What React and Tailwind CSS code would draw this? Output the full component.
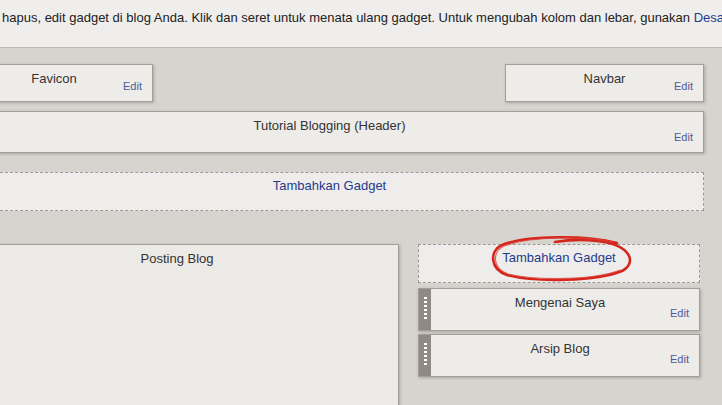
const TITLE = 'text-[13px] leading-[16px] text-[#333]';
const EDIT = 'text-[11px] leading-[13px] text-[#4b5b9b]';

function Widget({ title, className = '' }) {
  return (
    <div className={`grid border border-[#a39e99] bg-[#eeece9] pt-[6px] pr-[10px] pb-[8px] shadow-[1px_1px_3px_rgba(0,0,0,0.22)] ${className}`}>
      <div className={`${TITLE} col-start-1 row-start-1 self-start text-center pl-[10px]`}>{title}</div>
      <div className={`${EDIT} col-start-1 row-start-1 self-end justify-self-end`}>Edit</div>
    </div>
  );
}

function SideWidget({ title }) {
  return (
    <div className="flex h-[43px] border border-[#a39e99] bg-[#eeece9] shadow-[1px_1px_3px_rgba(0,0,0,0.22)]">
      <div className="w-[12px] bg-[#8f8a85] flex flex-col items-center gap-[2px] pt-[8px]">
        {[...Array(6)].map((_, i) => (
          <span key={i} className="w-[3px] h-[2px] bg-white" />
        ))}
      </div>
      <div className="flex-1 grid pt-[6px] pr-[10px] pb-[10px]">
        <div className={`${TITLE} col-start-1 row-start-1 self-start text-center`}>{title}</div>
        <div className={`${EDIT} col-start-1 row-start-1 self-end justify-self-end`}>Edit</div>
      </div>
    </div>
  );
}

function AddGadget({ className = '', children }) {
  return (
    <div className={`relative border border-dashed border-[#9c9893] bg-[#eeedeb] pt-[5px] text-center text-[13px] leading-[16px] text-[#1f3b8c] ${className}`}>
      Tambahkan Gadget
      {children}
    </div>
  );
}

export default function App() {
  return (
    <div className="w-[722px] h-[405px] overflow-hidden bg-[#d7d3ce] font-['Liberation_Sans',Arial,sans-serif]">
      {/* info bar */}
      <div className="h-[48px] bg-[#efeeec] border-b border-[#bdb9b4] pl-[2px] pt-[10px] text-[13px] leading-[16px] text-[#222] whitespace-nowrap overflow-hidden">
        hapus, edit gadget di blog Anda. Klik dan seret untuk menata ulang gadget. Untuk mengubah kolom dan lebar, gunakan{' '}
        <span className="text-[#1f3b8c]">Desainer Template</span>.
      </div>

      <div className="-ml-[45px] w-[749px] pt-[16px]">
        <div className="flex justify-between">
          <Widget title="Favicon" className="w-[198px] h-[38px]" />
          <Widget title="Navbar" className="w-[199px] h-[38px]" />
        </div>

        <Widget title="Tutorial Blogging (Header)" className="mt-[9px] h-[42px]" />

        <AddGadget className="mt-[19px] h-[39px]" />

        <div className="flex mt-[33px] gap-[19px]">
          <div className="w-[444px] h-[200px] border border-[#a39e99] bg-[#eceae7] pt-[6px] shadow-[1px_1px_3px_rgba(0,0,0,0.22)]">
            <div className={`${TITLE} text-center`}>Posting Blog</div>
          </div>

          <div className="w-[282px] flex flex-col">
            <AddGadget className="h-[39px]">
              <svg className="absolute left-[68px] top-[-12px]" width="150" height="52" viewBox="0 0 150 52" fill="none">
                <path
                  d="M130 10 C100 2, 40 2, 15 12 C2 18, 3 36, 20 42 C50 50, 110 48, 135 38 C150 30, 145 12, 110 8 C95 6, 80 7, 68 9"
                  stroke="#d4261c"
                  strokeWidth="2.6"
                  strokeLinecap="round"
                />
                <path
                  d="M126 9 C96 3, 44 3, 17 13 C5 19, 5 35, 21 41 C52 48, 108 47, 133 37"
                  stroke="#e0443a"
                  strokeWidth="1.2"
                  strokeLinecap="round"
                  opacity="0.8"
                />
              </svg>
            </AddGadget>
            <div className="mt-[5px]">
              <SideWidget title="Mengenai Saya" />
            </div>
            <div className="mt-[3px]">
              <SideWidget title="Arsip Blog" />
            </div>
          </div>
        </div>
      </div>
    </div>
  );
}
